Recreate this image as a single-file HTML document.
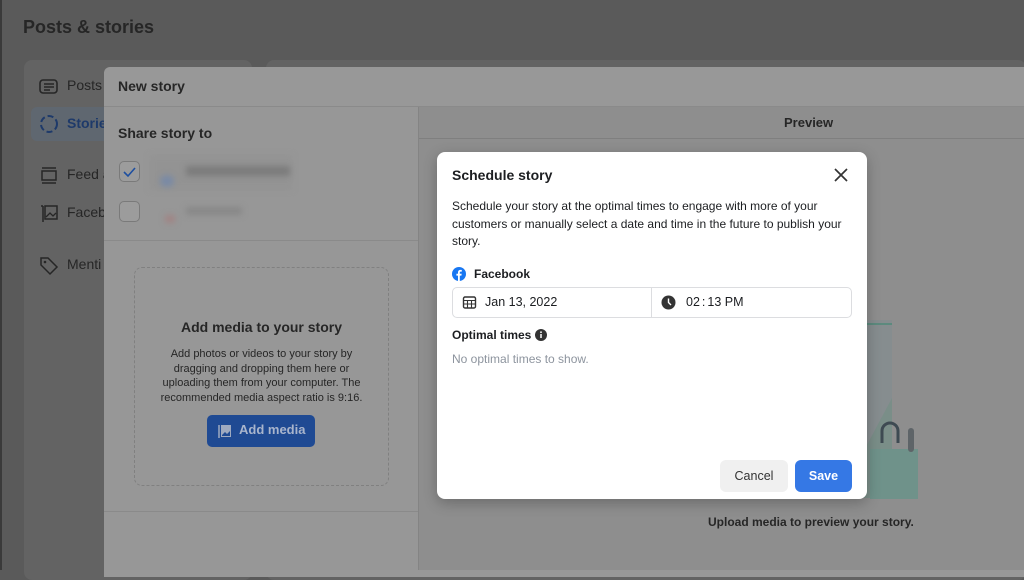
<!DOCTYPE html>
<html><head><meta charset="utf-8"><style>
*{margin:0;padding:0;box-sizing:border-box}
body{width:1024px;height:570px;overflow:hidden;background:#5a5a5a;font-family:"Liberation Sans",Arial,sans-serif;position:relative;color:#1c1e21}
.abs{position:absolute}
</style></head><body>
<div class="abs" style="left:0;top:0;width:2px;height:570px;background:#3a3a3a"></div>
<div class="abs" style="left:23px;top:17px;font-size:18px;font-weight:bold;color:#262626">Posts &amp; stories</div>
<div class="abs" style="left:24px;top:60px;width:228px;height:520px;background:#636363;border-radius:8px"></div>
<div class="abs" style="left:266px;top:60px;width:760px;height:520px;background:#636363;border-radius:8px"></div>
<div class="abs" style="left:31px;top:107px;width:90px;height:34px;background:#5f6770;border-radius:6px"></div>
<svg class="abs" style="left:38px;top:76px" width="22" height="22" viewBox="0 0 22 22"><rect x="2" y="4" width="17" height="13" rx="3" fill="none" stroke="#262626" stroke-width="1.6"/><path d="M6 8h10M6 11h10M6 14h6" stroke="#262626" stroke-width="1.4"/></svg>
<div class="abs" style="left:67px;top:77px;font-size:14px;color:#262626">Posts</div>
<svg class="abs" style="left:38px;top:113px" width="22" height="22"><circle cx="11" cy="11" r="8" fill="none" stroke="#1e3a6a" stroke-width="2" stroke-dasharray="6 3"/></svg>
<div class="abs" style="left:67px;top:115px;font-size:14px;font-weight:bold;color:#1e3a6a">Storie</div>
<svg class="abs" style="left:38px;top:164px" width="22" height="22"><path d="M4 4h14M4 19h14" stroke="#262626" stroke-width="1.5"/><rect x="4" y="7" width="14" height="9" fill="none" stroke="#262626" stroke-width="1.5"/></svg>
<div class="abs" style="left:67px;top:166px;font-size:14px;color:#262626">Feed a</div>
<svg class="abs" style="left:38px;top:202px" width="22" height="22"><path d="M5 4v16M3 4h2" stroke="#262626" stroke-width="1.5"/><rect x="7" y="4" width="12" height="13" fill="none" stroke="#262626" stroke-width="1.5"/><path d="M8 15l4-4 3 3 3-3" stroke="#262626" stroke-width="1.3" fill="none"/></svg>
<div class="abs" style="left:67px;top:204px;font-size:14px;color:#262626">Faceb</div>
<svg class="abs" style="left:38px;top:254px" width="22" height="22"><path d="M3 4v7l9 9 7-7-9-9z" fill="none" stroke="#262626" stroke-width="1.5"/><circle cx="7" cy="8" r="1.3" fill="#262626"/></svg>
<div class="abs" style="left:67px;top:256px;font-size:14px;color:#262626">Menti</div>

<div class="abs" style="left:104px;top:67px;width:930px;height:510px;background:#989898;border-radius:6px 0 0 0"></div>
<div class="abs" style="left:118px;top:78px;font-size:14px;font-weight:bold;color:#262626">New story</div>
<div class="abs" style="left:104px;top:106px;width:920px;height:1px;background:#8a8a8a"></div>
<div class="abs" style="left:104px;top:107px;width:314px;height:463px;background:#979797"></div>
<div class="abs" style="left:418px;top:107px;width:1px;height:463px;background:#848484"></div>
<div class="abs" style="left:419px;top:107px;width:605px;height:463px;background:#8e8e8e"></div>
<div class="abs" style="left:419px;top:138px;width:605px;height:1px;background:#7f7f7f"></div>
<div class="abs" style="left:784px;top:115px;font-size:13px;font-weight:bold;color:#262626">Preview</div>
<div class="abs" style="left:118px;top:125px;font-size:14px;font-weight:bold;color:#262626">Share story to</div>
<div class="abs" style="left:119px;top:161px;width:21px;height:21px;border:1px solid #7a7a7a;border-radius:5px;background:#9c9c9c"></div>
<svg class="abs" style="left:122px;top:164px" width="15" height="15"><path d="M2 8l4 4 7-8" stroke="#1e4fa0" stroke-width="1.6" fill="none"/></svg>
<div class="abs" style="left:119px;top:201px;width:21px;height:21px;border:1px solid #7a7a7a;border-radius:5px;background:#9c9c9c"></div>
<div class="abs" style="left:150px;top:155px;width:142px;height:35px;background:#939393;filter:blur(3px)"></div>
<div class="abs" style="left:186px;top:166px;width:104px;height:10px;background:#7c7c7c;filter:blur(3px)"></div>
<div class="abs" style="left:160px;top:175px;width:14px;height:12px;background:#7a8aa5;filter:blur(3px);border-radius:50%"></div>
<div class="abs" style="left:186px;top:207px;width:56px;height:8px;background:#888;filter:blur(3px)"></div>
<div class="abs" style="left:165px;top:215px;width:10px;height:8px;background:#a08585;filter:blur(3px)"></div>
<div class="abs" style="left:104px;top:240px;width:314px;height:1px;background:#8a8a8a"></div>
<div class="abs" style="left:134px;top:267px;width:255px;height:219px;border:1px dashed #808080;border-radius:8px"></div>
<div class="abs" style="left:134px;top:319px;width:255px;text-align:center;font-size:14px;font-weight:bold;color:#262626">Add media to your story</div>
<div class="abs" style="left:134px;top:347px;width:255px;text-align:center;font-size:11px;line-height:14.5px;color:#262626">Add photos or videos to your story by<br>dragging and dropping them here or<br>uploading them from your computer. The<br>recommended media aspect ratio is 9:16.</div>
<div class="abs" style="left:207px;top:415px;width:108px;height:32px;background:#1f4a93;border-radius:5px"></div>
<svg class="abs" style="left:217px;top:423px" width="16" height="16"><path d="M2 2v13" stroke="#9eaac0" stroke-width="1.5"/><rect x="4" y="2" width="10" height="12" fill="#9eaac0"/><path d="M5 12l3-3 2 2 3-3v5H5z" fill="#1f4a93"/></svg>
<div class="abs" style="left:239px;top:422px;font-size:13px;font-weight:bold;color:#a9b5cc">Add media</div>
<div class="abs" style="left:104px;top:511px;width:314px;height:1px;background:#8a8a8a"></div>

<svg class="abs" style="left:860px;top:318px" width="60" height="182"><rect x="0" y="2" width="32" height="175" fill="#868d8f"/><path d="M2 6h30" stroke="#5c8a7e" stroke-width="2"/><path d="M0 140L32 80v100H0z" fill="#7a8e88"/><path d="M22 125v-12a8 8 0 0116 0v12" stroke="#3e4a52" stroke-width="3" fill="none"/><rect x="10" y="131" width="48" height="50" fill="#6f928a"/><rect x="48" y="110" width="6" height="24" rx="3" fill="#5e6468"/></svg>
<div class="abs" style="left:708px;top:515px;font-size:12px;font-weight:bold;color:#262626">Upload media to preview your story.</div>

<div class="abs" style="left:437px;top:152px;width:430px;height:347px;background:#fff;border-radius:8px;box-shadow:0 4px 14px rgba(0,0,0,.25)"></div>
<div class="abs" style="left:452px;top:167px;font-size:14px;font-weight:bold;color:#1c1e21">Schedule story</div>
<svg class="abs" style="left:833px;top:167px" width="16" height="16"><path d="M2 2l12 12M14 2L2 14" stroke="#333" stroke-width="1.7"/></svg>
<div class="abs" style="left:452px;top:198px;width:400px;font-size:12px;line-height:17.5px;color:#1c1e21">Schedule your story at the optimal times to engage with more of your customers or manually select a date and time in the future to publish your story.</div>
<svg class="abs" style="left:452px;top:267px" width="14" height="14" viewBox="0 0 14 14"><circle cx="7" cy="7" r="7" fill="#1877f2"/><path d="M7.8 14V8.6h1.6l.3-1.9H7.8V5.5c0-.5.2-.9 1-.9h1V3c-.3 0-.8-.1-1.4-.1-1.4 0-2.4.9-2.4 2.4v1.4H4.4v1.9H6V14z" fill="#fff"/></svg>
<div class="abs" style="left:474px;top:267px;font-size:12px;font-weight:bold;color:#1c1e21">Facebook</div>
<div class="abs" style="left:452px;top:287px;width:400px;height:31px;border:1px solid #dcdde0;border-radius:5px"></div>
<div class="abs" style="left:651px;top:288px;width:1px;height:29px;background:#dcdde0"></div>
<svg class="abs" style="left:462px;top:295px" width="15" height="15"><rect x="1.5" y="2" width="12" height="11" rx="1.5" fill="none" stroke="#333" stroke-width="1.4"/><path d="M1.5 5.5h12M1.5 9h12M5.5 5.5v7.5M9.5 5.5v7.5" stroke="#333" stroke-width="1.1"/></svg>
<div class="abs" style="left:485px;top:295px;font-size:12.5px;color:#1c1e21">Jan 13, 2022</div>
<svg class="abs" style="left:661px;top:295px" width="15" height="15"><circle cx="7.5" cy="7.5" r="7" fill="#333"/><path d="M7.5 3.5v4l2.5 2.5" stroke="#fff" stroke-width="1.4" fill="none"/></svg>
<div class="abs" style="left:686px;top:295px;font-size:12.5px;color:#1c1e21">02<span style="margin:0 2px">:</span>13 PM</div>
<div class="abs" style="left:452px;top:328px;font-size:12px;font-weight:bold;color:#1c1e21">Optimal times</div>
<svg class="abs" style="left:535px;top:329px" width="12" height="12"><circle cx="6" cy="6" r="6" fill="#333"/><path d="M6 5v4" stroke="#fff" stroke-width="1.5"/><circle cx="6" cy="3.2" r=".9" fill="#fff"/></svg>
<div class="abs" style="left:452px;top:352px;font-size:12px;color:#8d949e">No optimal times to show.</div>
<div class="abs" style="left:720px;top:460px;width:68px;height:32px;background:#f0f0f0;border-radius:6px;font-size:12.5px;line-height:32px;text-align:center;color:#333">Cancel</div>
<div class="abs" style="left:795px;top:460px;width:57px;height:32px;background:#3578e5;border-radius:6px;font-size:12.5px;font-weight:bold;line-height:32px;text-align:center;color:#fff">Save</div>
</body></html>
